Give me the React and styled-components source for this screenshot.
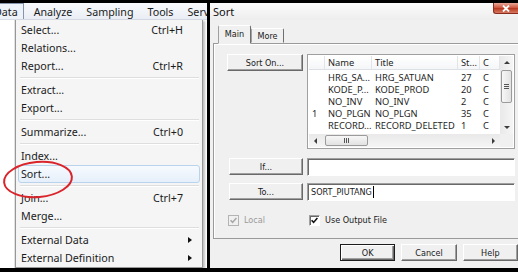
import React from 'react';
import styled, { createGlobalStyle, css } from 'styled-components';

const GlobalStyle = createGlobalStyle`
  html, body {
    margin: 0;
    padding: 0;
    background: #000;
  }
`;

const Screen = styled.div`
  width: 518px;
  height: 272px;
  box-sizing: border-box;
  display: flex;
  gap: 3px;
  padding: 3px 0 4px;
  background: #000;
  overflow: hidden;
`;

/* ---------- left: Data menu ---------- */

const MenuPane = styled.div`
  position: relative;
  width: 207px;
  flex: none;
  display: flex;
  flex-direction: column;
  background: #fff;
  overflow: hidden;
  font-family: "Noto Sans", "Open Sans", sans-serif;
  font-size: 10.7px;
  color: #1b1b1b;
  white-space: nowrap;
`;

const MenuBar = styled.div`
  height: 17px;
  flex: none;
  display: flex;
  box-sizing: border-box;
  background: linear-gradient(#f8fafc, #eaeef4);
  border-bottom: 1px solid #d7dde6;
`;

const MenuTitle = styled.div`
  display: flex;
  align-items: center;
  padding: 0 6px;
  border: 1px solid transparent;
  border-bottom: none;

  ${(p) =>
    p.$open &&
    css`
      margin: 0 3px 0 -12px;
      padding: 0 5px;
      background: #eef3f9;
      border-color: #8595ab;
    `}
`;

const MenuBody = styled.div`
  flex: 1;
  display: flex;
  padding-right: 4px;
`;

const Backdrop = styled.div`
  width: 15px;
  flex: none;
  border-right: 1px solid #e2e2e2;
  box-sizing: border-box;
`;

const Dropdown = styled.div`
  flex: 1;
  display: flex;
  flex-direction: column;
  padding-top: 1px;
  background: #f5f5f5;
  border: 1px solid #979797;
  border-top: none;
  box-shadow: 2px 1px 2px rgba(0, 0, 0, 0.25);
`;

const MenuItem = styled.div`
  height: 18px;
  flex: none;
  box-sizing: border-box;
  display: flex;
  align-items: center;
  margin: 0 2px;
  padding: 0 7px 0 2px;
  border: 1px solid transparent;
  border-radius: 3px;

  ${(p) =>
    p.$hot &&
    css`
      border-color: #b9d3ec;
      background: linear-gradient(#f6fafe, #e6f0fa);
    `}
`;

const ItemLabel = styled.span`
  flex: 1;
`;

const Shortcut = styled.span`
  margin-right: 9px;
`;

const SubArrow = styled.span`
  width: 0;
  height: 0;
  border-left: 4px solid #111;
  border-top: 3.5px solid transparent;
  border-bottom: 3.5px solid transparent;
`;

const MenuSeparator = styled.div`
  height: 6px;
  flex: none;
  display: flex;
  align-items: center;
  margin: 0 3px 0 4px;

  &::after {
    content: '';
    flex: 1;
    border-top: 1px solid #dedede;
    border-bottom: 1px solid #fff;
  }
`;

const Circle = styled.svg`
  position: absolute;
  left: 0;
  top: 154px;
  pointer-events: none;
`;

/* ---------- right: Sort dialog ---------- */

const Dialog = styled.div`
  flex: 1;
  min-width: 0;
  display: flex;
  flex-direction: column;
  background: #f0f0f0;
  overflow: hidden;
  font-family: "DejaVu Sans Condensed", "DejaVu Sans", sans-serif;
  font-stretch: condensed;
  font-size: 9px;
  color: #1a1a1a;
  white-space: nowrap;
`;

const TitleBar = styled.div`
  height: 17px;
  flex: none;
  display: flex;
  justify-content: space-between;
  align-items: flex-start;
  padding-left: 3px;
  background: linear-gradient(#fcfcfc, #ededed);
`;

const Caption = styled.span`
  font-family: "Noto Sans", "Open Sans", sans-serif;
  font-stretch: normal;
  font-size: 11px;
  line-height: 17px;
  color: #111;
`;

const CloseButton = styled.div`
  width: 25px;
  height: 11px;
  display: flex;
  align-items: center;
  justify-content: center;
  box-sizing: border-box;
  border: 1px solid #8a2d1e;
  border-top: none;
  border-right: none;
  border-radius: 0 0 0 3px;
  background: linear-gradient(#e9a899, #cf5a43 45%, #b83a22 55%, #d77a62);
`;

const DialogBody = styled.div`
  flex: 1;
  display: flex;
  flex-direction: column;
  padding: 4px 0 0 3px;
`;

const TabStrip = styled.div`
  height: 19px;
  display: flex;
  align-items: flex-end;
  padding-left: 5px;
  position: relative;
  z-index: 1;
`;

const Tab = styled.div`
  width: 33px;
  height: ${(p) => (p.$active ? 19 : 15)}px;
  margin-bottom: ${(p) => (p.$active ? -1 : 0)}px;
  box-sizing: border-box;
  display: flex;
  align-items: center;
  justify-content: center;
  padding-bottom: ${(p) => (p.$active ? 2 : 0)}px;
  background: #f0f0f0;
  border: 1px solid;
  border-color: #fff #6f6f6f transparent #a0a0a0;
  border-radius: 2px 2px 0 0;
`;

const TabPanel = styled.div`
  height: 196px;
  margin-right: -4px;
  box-sizing: border-box;
  display: flex;
  flex-direction: column;
  padding: 10px 6px 0 13px;
  border: 1px solid #9a9a9a;
  box-shadow: inset 1px 1px #fff;
`;

const FieldRow = styled.div`
  display: grid;
  grid-template-columns: 76px 1fr;
  column-gap: 4px;
  align-items: start;
  justify-items: ${(p) => (p.$inset ? 'stretch' : 'stretch')};
  margin-top: ${(p) => p.$top || 0}px;
`;

const PushButton = styled.button`
  font: inherit;
  color: inherit;
  width: ${(p) => p.$width || 76}px;
  height: 17px;
  margin: 0 0 0 ${(p) => p.$shift || 0}px;
  padding: 0;
  box-sizing: border-box;
  background: #f0f0f0;
  border: 1px solid;
  border-color: #fff #696969 #696969 #fff;
  box-shadow: inset -1px -1px #a0a0a0;

  ${(p) =>
    p.$default &&
    css`
      border-color: #1c1c1c;
      box-shadow: inset 1px 1px #fff, inset -1px -1px #696969,
        inset -2px -2px #a0a0a0;
    `}
`;

const TextField = styled.div`
  height: 18px;
  box-sizing: border-box;
  display: flex;
  align-items: center;
  padding: 0 3px;
  background: #fff;
  border: 1px solid;
  border-color: #a0a0a0 #fff #fff #a0a0a0;
  box-shadow: inset 1px 1px #696969;
`;

const Caret = styled.span`
  width: 1px;
  height: 12px;
  margin-left: 1px;
  background: #000;
`;

const GridFrame = styled.div`
  height: 95px;
  box-sizing: border-box;
  display: grid;
  grid-template-columns: 1fr 13px;
  grid-template-rows: 1fr 13px;
  padding: 1px;
  background: #fff;
  border: 1px solid #a0a0a0;
  font-family: "Noto Sans", "Open Sans", sans-serif;
  font-stretch: normal;
  font-size: 9.3px;
  color: #1e1e1e;
`;

const Table = styled.div`
  display: grid;
  grid-template-columns: 16px 47px 86px 22px 1fr;
  grid-template-rows: 15px;
  grid-auto-rows: 12px;
  overflow: hidden;
  align-content: start;
`;

const HeadCell = styled.div`
  display: flex;
  align-items: center;
  padding-left: 3px;
  margin-bottom: 1px;
  border-right: 1px solid #e2e4e8;
  border-bottom: 1px solid #dcdfe4;
  background: linear-gradient(#fff, #f5f6f8);
  overflow: hidden;
`;

const Cell = styled.div`
  display: flex;
  align-items: center;
  padding-left: 3px;
  overflow: hidden;
`;

const VScroll = styled.div`
  grid-row: 1;
  grid-column: 2;
  display: flex;
  flex-direction: column;
  align-items: center;
  background: linear-gradient(90deg, #e9e9e9, #f5f5f5);
`;

const HScroll = styled.div`
  grid-row: 2;
  grid-column: 1;
  display: flex;
  align-items: center;
  background: linear-gradient(#e9e9e9, #f5f5f5);
`;

const Corner = styled.div`
  grid-row: 2;
  grid-column: 2;
  background: #f0f0f0;
`;

const ArrowBox = styled.div`
  width: 13px;
  height: 13px;
  flex: none;
  display: flex;
  align-items: center;
  justify-content: center;
`;

const Triangle = styled.span`
  width: 0;
  height: 0;
  ${(p) => {
    const c = '#3c3c3c';
    switch (p.$dir) {
      case 'up':
        return css`border: 3px solid transparent; border-top: 0; border-bottom: 3px solid ${c};`;
      case 'down':
        return css`border: 3px solid transparent; border-bottom: 0; border-top: 3px solid ${c};`;
      case 'left':
        return css`border: 3px solid transparent; border-left: 0; border-right: 3px solid ${c};`;
      default:
        return css`border: 3px solid transparent; border-right: 0; border-left: 3px solid ${c};`;
    }
  }}
`;

const Thumb = styled.div`
  flex: none;
  box-sizing: border-box;
  display: flex;
  align-items: center;
  justify-content: center;
  border: 1px solid #9b9b9b;
  border-radius: 2px;
  background: linear-gradient(${(p) => (p.$vertical ? '90deg' : '180deg')}, #f7f7f7, #e2e2e2);

  ${(p) =>
    p.$vertical
      ? css`
          width: 11px;
          height: 33px;
          margin-top: 1px;
        `
      : css`
          width: 43px;
          height: 11px;
          margin-left: 3px;
        `}
`;

const Grip = styled.span`
  width: 5px;
  height: 5px;
  background: repeating-linear-gradient(
    ${(p) => (p.$vertical ? '180deg' : '90deg')},
    #555 0 1px,
    transparent 1px 2px
  );
`;

const Spacer = styled.div`
  flex: 1;
`;

const CheckRow = styled.div`
  display: grid;
  grid-template-columns: 76px 1fr;
  column-gap: 4px;
  margin-top: 13px;
  height: 12px;
`;

const CheckLabel = styled.label`
  display: flex;
  align-items: center;
  gap: 5px;
  padding-left: ${(p) => p.$indent || 0}px;
  color: ${(p) => (p.$disabled ? '#9a9a9a' : 'inherit')};
`;

const CheckBox = styled.span`
  width: 11px;
  height: 11px;
  box-sizing: border-box;
  display: inline-flex;
  align-items: center;
  justify-content: center;
  background: #fff;
  border: 1px solid;
  border-color: #a0a0a0 #fff #fff #a0a0a0;
  box-shadow: inset 1px 1px #696969;

  ${(p) =>
    p.$disabled &&
    css`
      background: #f0f0f0;
      border-color: #b4b4b4;
      box-shadow: none;
    `}
`;

const ButtonRow = styled.div`
  display: flex;
  gap: 6px;
  margin-top: 5px;
  padding-left: 127px;
`;

const menuEntries = [
  { label: 'Select...', key: 'Ctrl+H' },
  { label: 'Relations...' },
  { label: 'Report...', key: 'Ctrl+R' },
  'sep',
  { label: 'Extract...' },
  { label: 'Export...' },
  'sep',
  { label: 'Summarize...', key: 'Ctrl+0' },
  'sep',
  { label: 'Index...' },
  { label: 'Sort...', hot: true },
  'sep',
  { label: 'Join...', key: 'Ctrl+7' },
  { label: 'Merge...' },
  'sep',
  { label: 'External Data', sub: true },
  { label: 'External Definition', sub: true },
];

const fields = [
  ['', 'HRG_SA...', 'HRG_SATUAN', '27', 'C'],
  ['', 'KODE_P...', 'KODE_PROD', '20', 'C'],
  ['', 'NO_INV', 'NO_INV', '2', 'C'],
  ['1', 'NO_PLGN', 'NO_PLGN', '35', 'C'],
  ['', 'RECORD...', 'RECORD_DELETED', '1', 'C'],
];

const Check = ({ color }) => (
  <svg width="7" height="7" viewBox="0 0 7 7">
    <polyline points="0.6,3.2 2.6,5.4 6.4,1" fill="none" stroke={color} strokeWidth="1.6" />
  </svg>
);

export default function App() {
  return (
    <>
      <GlobalStyle />
      <Screen>
        <MenuPane>
          <MenuBar>
            <MenuTitle $open>Data</MenuTitle>
            <MenuTitle>Analyze</MenuTitle>
            <MenuTitle>Sampling</MenuTitle>
            <MenuTitle>Tools</MenuTitle>
            <MenuTitle>Server</MenuTitle>
          </MenuBar>
          <MenuBody>
            <Backdrop />
            <Dropdown>
              {menuEntries.map((e, i) =>
                e === 'sep' ? (
                  <MenuSeparator key={i} />
                ) : (
                  <MenuItem key={i} $hot={e.hot}>
                    <ItemLabel>{e.label}</ItemLabel>
                    {e.key && <Shortcut>{e.key}</Shortcut>}
                    {e.sub && <SubArrow />}
                  </MenuItem>
                )
              )}
            </Dropdown>
          </MenuBody>
          <Circle width="80" height="46" viewBox="0 0 80 46">
            <ellipse
              cx="38"
              cy="22.5"
              rx="34"
              ry="17.5"
              fill="none"
              stroke="#d9242b"
              strokeWidth="2"
              transform="rotate(-5 38 22.5)"
            />
          </Circle>
        </MenuPane>

        <Dialog>
          <TitleBar>
            <Caption>Sort</Caption>
            <CloseButton>
              <svg width="8" height="7" viewBox="0 0 8 7">
                <path d="M1 0.5 L7 6.5 M7 0.5 L1 6.5" stroke="#fff" strokeWidth="1.8" />
              </svg>
            </CloseButton>
          </TitleBar>
          <DialogBody>
            <TabStrip>
              <Tab $active>Main</Tab>
              <Tab>More</Tab>
            </TabStrip>
            <TabPanel>
              <FieldRow>
                <PushButton>Sort On...</PushButton>
                <GridFrame>
                  <Table>
                    <HeadCell />
                    <HeadCell>Name</HeadCell>
                    <HeadCell>Title</HeadCell>
                    <HeadCell>St...</HeadCell>
                    <HeadCell>C</HeadCell>
                    {fields.map((row, r) =>
                      row.map((v, c) => <Cell key={`${r}-${c}`}>{v}</Cell>)
                    )}
                  </Table>
                  <VScroll>
                    <ArrowBox>
                      <Triangle $dir="up" />
                    </ArrowBox>
                    <Thumb $vertical>
                      <Grip $vertical />
                    </Thumb>
                    <Spacer />
                    <ArrowBox>
                      <Triangle $dir="down" />
                    </ArrowBox>
                  </VScroll>
                  <HScroll>
                    <ArrowBox>
                      <Triangle $dir="left" />
                    </ArrowBox>
                    <Thumb>
                      <Grip />
                    </Thumb>
                    <Spacer />
                    <ArrowBox>
                      <Triangle $dir="right" />
                    </ArrowBox>
                  </HScroll>
                  <Corner />
                </GridFrame>
              </FieldRow>

              <FieldRow $top={9}>
                <PushButton $width={74} $shift={2}>
                  If...
                </PushButton>
                <TextField />
              </FieldRow>

              <FieldRow $top={7}>
                <PushButton $width={74} $shift={2}>
                  To...
                </PushButton>
                <TextField>
                  SORT_PIUTANG
                  <Caret />
                </TextField>
              </FieldRow>

              <CheckRow>
                <CheckLabel $disabled $indent={1}>
                  <CheckBox $disabled>
                    <Check color="#a8a8a8" />
                  </CheckBox>
                  Local
                </CheckLabel>
                <CheckLabel $indent={2}>
                  <CheckBox>
                    <Check color="#111" />
                  </CheckBox>
                  Use Output File
                </CheckLabel>
              </CheckRow>
            </TabPanel>

            <ButtonRow>
              <PushButton $width={57} $default>
                OK
              </PushButton>
              <PushButton $width={57}>Cancel</PushButton>
              <PushButton $width={57}>Help</PushButton>
            </ButtonRow>
          </DialogBody>
        </Dialog>
      </Screen>
    </>
  );
}
